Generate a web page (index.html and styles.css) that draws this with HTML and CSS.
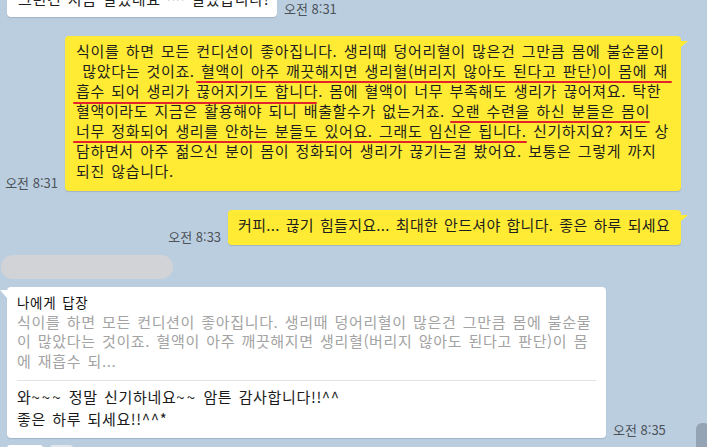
FILE: index.html
```html
<!DOCTYPE html>
<html lang="ko">
<head>
<meta charset="utf-8">
<title>채팅</title>
<link rel="stylesheet" href="styles.css">
</head>
<body>
<div class="chat">
  <div class="row in row-top">
    <div class="bubble white top-bubble"><span class="ln">그런건 지금 알았네요 ^^ 알았습니다!</span></div>
    <span class="time">오전 8:31</span>
  </div>

  <div class="row out row-big">
    <span class="time">오전 8:31</span>
    <div class="bubble yellow big">
      <span class="ln">식이를 하면 모든 컨디션이 좋아집니다. 생리때 덩어리혈이 많은건 그만큼 몸에 불순물이</span>
      <span class="ln"> 많았다는 것이죠. 혈액이 아주 깨끗해지면 생리혈(버리지 않아도 된다고 판단)이 몸에 재</span>
      <span class="ln">흡수 되어 생리가 끊어지기도 합니다. 몸에 혈액이 너무 부족해도 생리가 끊어져요. 탁한</span>
      <span class="ln">혈액이라도 지금은 활용해야 되니 배출할수가 없는거죠. 오랜 수련을 하신 분들은 몸이</span>
      <span class="ln">너무 정화되어 생리를 안하는 분들도 있어요. 그래도 임신은 됩니다. 신기하지요? 저도 상</span>
      <span class="ln">담하면서 아주 젊으신 분이 몸이 정화되어 생리가 끊기는걸 봤어요. 보통은 그렇게 까지</span>
      <span class="ln">되진 않습니다.</span>
      <span class="mark m1"></span>
      <span class="mark m2"></span>
      <span class="mark m3"></span>
      <span class="mark m4"></span>
    </div>
  </div>

  <div class="row out row-short">
    <span class="time">오전 8:33</span>
    <div class="bubble yellow short"><span class="ln">커피... 끊기 힘들지요... 최대한 안드셔야 합니다. 좋은 하루 되세요</span></div>
  </div>

  <div class="name-blur"></div>

  <div class="row in row-reply">
    <div class="bubble white reply">
      <div class="reply-head">나에게 답장</div>
      <div class="quote">
        <span class="ln">식이를 하면 모든 컨디션이 좋아집니다. 생리때 덩어리혈이 많은건 그만큼 몸에 불순물</span>
        <span class="ln">이 많았다는 것이죠. 혈액이 아주 깨끗해지면 생리혈(버리지 않아도 된다고 판단)이 몸</span>
        <span class="ln">에 재흡수 되...</span>
      </div>
      <div class="sep"></div>
      <div class="reply-text">
        <span class="ln">와<span class="tl">~~~</span> 정말 신기하네요<span class="tl">~~</span> 암튼 감사합니다!!^^</span>
        <span class="ln">좋은 하루 되세요!!^^*</span>
      </div>
    </div>
    <span class="time">오전 8:35</span>
  </div>

  <div class="row-next">
    <div class="chip chip-white"></div>
    <div class="chip chip-gray"></div>
  </div>
</div>
<div class="scroll-thumb"></div>
</body>
</html>
```

FILE: styles.css
```css
html, body {
  margin: 0;
  padding: 0;
  overflow: hidden;
}

body {
  height: 447px;
  background: #bbcee0;
  font-family: "Noto Sans CJK KR", "Noto Sans", sans-serif;
  position: relative;
}

.chat {
  display: flex;
  flex-direction: column;
}

.row {
  display: flex;
  align-items: flex-end;
}

.row.in {
  padding-left: 7px;
  gap: 7px;
}

.row.out {
  justify-content: flex-end;
  padding-right: 26px;
  gap: 7px;
}

.row-top {
  margin-top: -15px;
}

.row-big {
  margin-top: 19px;
}

.row-short {
  margin-top: 19px;
}

.row-reply {
  margin-top: 8px;
}

.bubble {
  position: relative;
  box-sizing: border-box;
  font-size: 15px;
  line-height: 20px;
  letter-spacing: 0.65px;
  word-spacing: 1.5px;
  color: #1e1e1e;
  border-radius: 4px;
  padding: 5px 11px 10px;
  box-shadow: 0 1px 1px rgba(40, 60, 90, 0.18);
}

.ln {
  display: block;
  white-space: pre;
}

.white {
  background: #ffffff;
}

.yellow {
  background: #ffeb33;
}

.top-bubble {
  width: 270px;
  padding-bottom: 8px;
  padding-top: 4px;
}

.big {
  width: 616px;
  padding-left: 11px;
}

.short {
  letter-spacing: 0.3px;
  padding-left: 10px;
}

.out .bubble::after {
  content: "";
  position: absolute;
  top: 5px;
  right: -7px;
  width: 0;
  height: 0;
  border-top: 6px solid #ffeb33;
  border-right: 7px solid transparent;
}

.reply::before {
  content: "";
  position: absolute;
  top: 3px;
  left: -7px;
  width: 0;
  height: 0;
  border-top: 8px solid #ffffff;
  border-left: 7px solid transparent;
}

.time {
  font-size: 13px;
  line-height: 14px;
  color: #4d5258;
  white-space: nowrap;
  padding-bottom: 1px;
}

.mark {
  position: absolute;
  height: 2px;
  background: #e4232a;
  border-radius: 1px;
}

.m1 { left: 131px; top: 45px; width: 476px; }
.m2 { left: 8px;   top: 66px; width: 244px; }
.m3 { left: 385px; top: 85px; width: 200px; }
.m4 { left: 8px;   top: 105px; width: 454px; }

.name-blur {
  margin-top: 10px;
  margin-left: 1px;
  width: 172px;
  height: 24px;
  border-radius: 12px;
  background: #d1d3d6;
}

.reply {
  width: 599px;
  padding: 6px 10px 8px;
}

.reply-head {
  font-size: 13.5px;
  line-height: 19px;
  color: #111111;
}

.quote {
  color: #a3a3a3;
  line-height: 19.3px;
}

.sep {
  height: 1px;
  background: #e3e3e3;
  margin: 10px 0 5px;
}

.reply-text {
  line-height: 22px;
  color: #1a1a1a;
}

.tl {
  letter-spacing: 2px;
}

.row-next {
  display: flex;
  gap: 7px;
  padding-left: 7px;
  margin-top: 7px;
}

.chip {
  height: 12px;
  border-radius: 3px;
}

.chip-white {
  width: 36px;
  background: #ffffff;
}

.chip-gray {
  width: 23px;
  background: #e2e8ee;
}

.scroll-thumb {
  position: absolute;
  left: 696px;
  top: 423px;
  width: 14px;
  height: 40px;
  border-radius: 6px;
  background: #95a4b5;
}
```
